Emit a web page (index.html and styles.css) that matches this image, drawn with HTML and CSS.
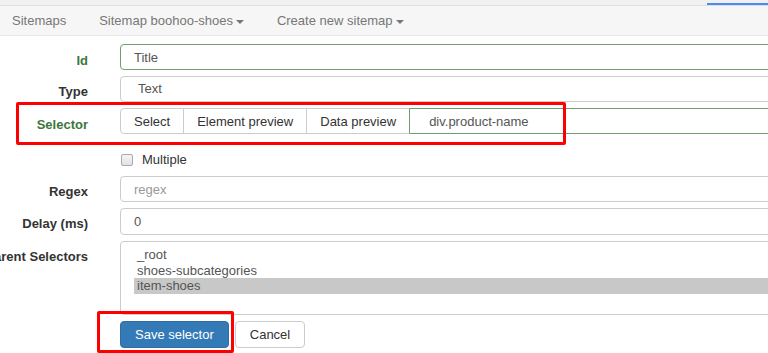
FILE: index.html
```html
<!DOCTYPE html>
<html lang="en">
<head>
  <meta charset="UTF-8">
  <meta name="viewport" content="width=device-width, initial-scale=1.0">
  <title>Selector editor</title>
  <link rel="stylesheet" href="styles.css">
</head>
<body>
  <div class="topstrip"><span class="tab-accent"></span></div>
  <nav class="navbar">
    <a class="nav-item">Sitemaps</a>
    <a class="nav-item">Sitemap boohoo-shoes<span class="caret"></span></a>
    <a class="nav-item">Create new sitemap<span class="caret"></span></a>
  </nav>

  <form class="form">
    <div class="form-group has-success">
      <label class="label">Id</label>
      <div class="field"><input class="control" type="text" value="Title"></div>
    </div>
    <div class="form-group">
      <label class="label">Type</label>
      <div class="field"><div class="control select-like">Text</div></div>
    </div>
    <div class="form-group has-success">
      <label class="label">Selector</label>
      <div class="field input-group">
        <button type="button" class="btn btn-default">Select</button>
        <button type="button" class="btn btn-default">Element preview</button>
        <button type="button" class="btn btn-default">Data preview</button>
        <input class="control group-input" type="text" value="div.product-name">
      </div>
    </div>
    <div class="form-group checkbox-row">
      <span class="label"></span>
      <div class="field">
        <label class="checkbox"><span class="check-box"></span>Multiple</label>
      </div>
    </div>
    <div class="form-group">
      <label class="label">Regex</label>
      <div class="field"><input class="control" type="text" placeholder="regex"></div>
    </div>
    <div class="form-group">
      <label class="label">Delay (ms)</label>
      <div class="field"><input class="control tall" type="text" value="0"></div>
    </div>
    <div class="form-group">
      <label class="label">Parent Selectors</label>
      <div class="field">
        <div class="control multi-select">
          <div class="option">_root</div>
          <div class="option">shoes-subcategories</div>
          <div class="option selected">item-shoes</div>
        </div>
      </div>
    </div>
    <div class="form-group">
      <span class="label"></span>
      <div class="field actions">
        <button type="button" class="btn btn-primary">Save selector</button>
        <button type="button" class="btn btn-default">Cancel</button>
      </div>
    </div>
  </form>

  <!-- annotation boxes drawn over the screenshot -->
  <div class="highlight highlight-selector"></div>
  <div class="highlight highlight-save"></div>
</body>
</html>
```

FILE: styles.css
```css
body {
  margin: 0;
  font-family: "Liberation Sans", Arial, sans-serif;
  font-size: 13px;
  color: #333;
  background-color: #fff;
  overflow: hidden;
  position: relative;
  height: 353px;
}
.topstrip {
  height: 5px;
  background-color: #f1f1f1;
  border-bottom: 1px solid #dedede;
  display: flex;
  justify-content: flex-end;
  align-items: flex-end;
}
.tab-accent {
  width: 61px;
  height: 2px;
  background-color: #4a8af4;
}
.navbar {
  height: 29px;
  background-color: #f6f6f6;
  border-bottom: 1px solid #e7e7e7;
  display: flex;
  align-items: center;
  padding-left: 12px;
  gap: 33px;
}
.nav-item {
  color: #777;
  white-space: nowrap;
}
.caret {
  display: inline-block;
  width: 0;
  height: 0;
  margin-left: 3px;
  vertical-align: middle;
  border-top: 4px solid #777;
  border-left: 4px solid transparent;
  border-right: 4px solid transparent;
}
.form {
  padding-top: 8px;
}
.form-group {
  display: grid;
  grid-template-columns: 88px 1fr;
  column-gap: 32px;
  margin-bottom: 6px;
}
.label {
  display: flex;
  justify-content: flex-end;
  white-space: nowrap;
  font-weight: bold;
  padding-top: 8px;
  color: #333;
}
.has-success .label {
  color: #3c763d;
  padding-top: 9px;
}
.field {
  min-width: 0;
  margin-right: -12px;
}
.control {
  box-sizing: border-box;
  display: block;
  width: 100%;
  height: 26px;
  padding: 0 13px;
  font-family: inherit;
  font-size: 13px;
  color: #555;
  background-color: #fff;
  border: 1px solid #ccc;
  border-radius: 4px;
  line-height: 24px;
  outline: none;
}
.control::placeholder {
  color: #999;
}
.control.tall {
  height: 27px;
}
.has-success .control {
  border-color: #6f9f6f;
}
.select-like {
  padding-left: 17px;
}
.input-group {
  display: flex;
}
.btn {
  box-sizing: border-box;
  height: 27px;
  padding: 0 14px;
  font-family: inherit;
  font-size: 13px;
  border: 1px solid #ccc;
  border-radius: 4px;
  background-color: #fff;
  color: #333;
  white-space: nowrap;
  cursor: pointer;
}
.input-group .btn {
  height: 26px;
  padding: 0 13px;
  border-radius: 0;
  margin-right: -1px;
}
.input-group .btn:first-child {
  border-radius: 4px 0 0 4px;
}
.input-group .group-input {
  flex: 1;
  border-radius: 0 4px 4px 0;
  padding-left: 19px;
  position: relative;
}
.checkbox-row {
  height: 30px;
}
.checkbox {
  display: flex;
  align-items: center;
  padding-top: 12px;
  padding-left: 1px;
  color: #333;
}
.check-box {
  box-sizing: border-box;
  width: 12px;
  height: 12px;
  margin-right: 9px;
  border: 1px solid #a9a9a9;
  border-radius: 2px;
  background: linear-gradient(#f4f4f4, #e2e2e2);
}
.multi-select {
  height: 74px;
  padding: 5px 0 0 13px;
  line-height: 15.5px;
  color: #555;
}
.option {
  padding-left: 3px;
}
.option.selected {
  background-color: #c8c8c8;
}
.actions {
  display: flex;
  gap: 6px;
  padding-top: 0;
}
.btn-primary {
  background-color: #337ab7;
  border-color: #2e6da4;
  color: #fff;
}
.highlight {
  position: absolute;
  box-sizing: border-box;
  border: 3px solid #f00;
  border-radius: 2px;
}
.highlight-selector {
  left: 16px;
  top: 102px;
  width: 550px;
  height: 43px;
}
.highlight-save {
  left: 97px;
  top: 311px;
  width: 137px;
  height: 42px;
}
```
